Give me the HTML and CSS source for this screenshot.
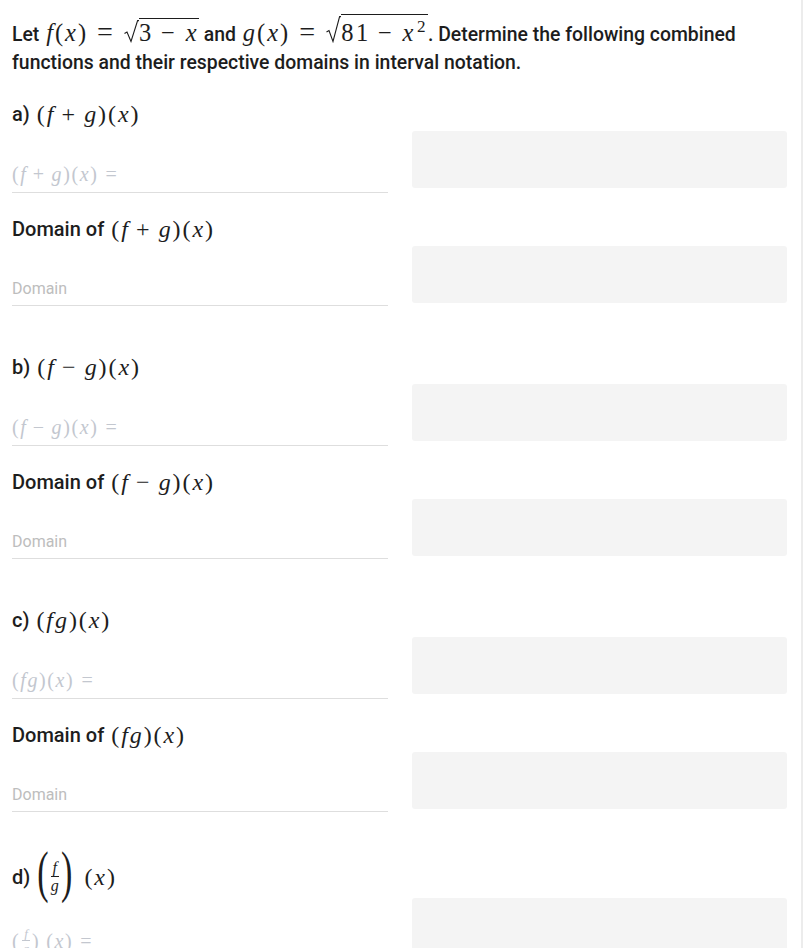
FILE: index.html
```html
<!DOCTYPE html>
<html lang="en">
<head>
<meta charset="utf-8">
<title>Combined functions</title>
<link rel="stylesheet" href="styles.css">
</head>
<body>
<div class="page">
  <p class="intro">Let <span class="m"><i>f</i>(<i>x</i>)<span class="rel">=</span><span class="sqrt"><svg class="rad" width="15" height="23" viewBox="0 0 15 23"><path d="M0.5 13.5 L3 12 L7 21.5 L13.6 0.6 L15 0.6" fill="none" stroke="#1d1d1d" stroke-width="1.1"/></svg><span class="under">3<span class="op">−</span><i>x</i></span></span></span> and <span class="m"><i>g</i>(<i>x</i>)<span class="rel">=</span><span class="sqrt"><svg class="rad" width="15" height="27" viewBox="0 0 15 27"><path d="M0.5 16 L3 14.5 L7 25.5 L13.6 0.6 L15 0.6" fill="none" stroke="#1d1d1d" stroke-width="1.1"/></svg><span class="under hi">81<span class="op">−</span><i>x</i><sup>2</sup></span></span></span>. Determine the following combined functions and their respective domains in interval notation.</p>

  <section class="part">
    <h2 class="label">a) <span class="m">(<i>f</i><span class="op">+</span><i>g</i>)(<i>x</i>)</span></h2>
    <div class="row">
      <div class="field"><span class="ph m">(<i>f</i><span class="op">+</span><i>g</i>)(<i>x</i>)<span class="rel">=</span></span></div>
      <div class="box"></div>
    </div>
    <h2 class="label">Domain of <span class="m">(<i>f</i><span class="op">+</span><i>g</i>)(<i>x</i>)</span></h2>
    <div class="row">
      <div class="field dom"><span class="ph">Domain</span></div>
      <div class="box"></div>
    </div>
  </section>

  <section class="part">
    <h2 class="label">b) <span class="m">(<i>f</i><span class="op">−</span><i>g</i>)(<i>x</i>)</span></h2>
    <div class="row">
      <div class="field"><span class="ph m">(<i>f</i><span class="op">−</span><i>g</i>)(<i>x</i>)<span class="rel">=</span></span></div>
      <div class="box"></div>
    </div>
    <h2 class="label">Domain of <span class="m">(<i>f</i><span class="op">−</span><i>g</i>)(<i>x</i>)</span></h2>
    <div class="row">
      <div class="field dom"><span class="ph">Domain</span></div>
      <div class="box"></div>
    </div>
  </section>

  <section class="part">
    <h2 class="label">c) <span class="m">(<i>f</i><i>g</i>)(<i>x</i>)</span></h2>
    <div class="row">
      <div class="field"><span class="ph m">(<i>f</i><i>g</i>)(<i>x</i>)<span class="rel">=</span></span></div>
      <div class="box"></div>
    </div>
    <h2 class="label">Domain of <span class="m">(<i>f</i><i>g</i>)(<i>x</i>)</span></h2>
    <div class="row">
      <div class="field dom"><span class="ph">Domain</span></div>
      <div class="box"></div>
    </div>
  </section>

  <section class="part">
    <h2 class="label tallrow">d) <span class="m mflex"><span class="bigp">(</span><span class="frac"><span class="num"><i>f</i></span><span class="den"><i>g</i></span></span><span class="bigp">)</span><span class="sp"></span><span>(<i>x</i>)</span></span></h2>
    <div class="row">
      <div class="field tallfield"><span class="ph m mflex"><span>(</span><span class="frac small"><span class="num"><i>f</i></span><span class="den"><i>g</i></span></span><span>)</span><span class="sp2"></span><span>(<i>x</i>)<span class="rel">=</span></span></span></div>
      <div class="box"></div>
    </div>
  </section>
</div>
</body>
</html>
```

FILE: styles.css
```css
html, body {
  margin: 0;
  padding: 0;
  background: #ffffff;
}

body {
  font-family: Roboto, "Liberation Sans", sans-serif;
  color: #1d1d1d;
}

.page {
  width: 803px;
  min-height: 948px;
  box-sizing: border-box;
  padding: 16px 0 0 12px;
  border-right: 2px solid #ececec;
  overflow: hidden;
}

.intro {
  margin: 0;
  width: 775px;
  font-size: 19.4px;
  font-weight: 500;
  line-height: 28px;
}

.m {
  font-family: "Liberation Serif", "Times New Roman", serif;
  font-weight: 400;
  font-size: 24px;
  line-height: 20px;
  letter-spacing: 0.08em;
  white-space: nowrap;
}

.intro .m {
  font-size: 24.5px;
  margin-left: 2px;
}

.m i {
  font-style: italic;
}

.op {
  margin: 0 0.3em 0 0.26em;
}

.rel {
  margin: 0 0.4em 0 0.36em;
}

.intro .rel {
  font-size: 1.15em;
  margin: 0 0.36em 0 0.32em;
  letter-spacing: 0;
}

.sqrt {
  white-space: nowrap;
}

.rad {
  vertical-align: -2px;
  margin-left: 1px;
}

.under {
  border-top: 1px solid #1d1d1d;
  letter-spacing: 0.1em;
}

.under.hi {
  padding-top: 4px;
}

.under .op {
  margin: 0 0.34em 0 0.3em;
}

.under sup {
  font-size: 0.7em;
  line-height: 0;
  vertical-align: 0.55em;
  margin-left: 1px;
}

.part {
  margin-top: 22px;
}

.part + .part {
  margin-top: 46px;
}

.label {
  margin: 0 0 2px 0;
  height: 30px;
  display: flex;
  align-items: center;
  gap: 7px;
  font-size: 20px;
  font-weight: 500;
  line-height: 30px;
}

.label .m {
  font-size: 24px;
}

.label.tallrow {
  height: 38px;
}

.mflex {
  display: inline-flex;
  align-items: center;
}

.row {
  display: flex;
  align-items: flex-start;
  gap: 24px;
}

.row + .label {
  margin-top: 21px;
}

.field {
  width: 376px;
  height: 62px;
  box-sizing: border-box;
  border-bottom: 1px solid #dedede;
  display: flex;
  align-items: flex-end;
  padding-bottom: 7px;
}

.field.dom {
  height: 60px;
  padding-bottom: 5px;
}

.field.tallfield {
  height: 70px;
  align-items: flex-start;
  padding: 30px 0 0 0;
}

.ph {
  color: #bdbdbd;
  font-size: 16px;
  line-height: 22px;
}

.ph.m {
  color: #c3c7cf;
  font-size: 20px;
  line-height: 22px;
}

.box {
  width: 375px;
  height: 57px;
  background: #f4f4f4;
  border-radius: 3px;
}

.bigp {
  display: inline-block;
  font-size: 34px;
  line-height: 34px;
  letter-spacing: 0;
  transform: translateY(-4px) scaleY(1.68);
}

.frac {
  display: inline-flex;
  flex-direction: column;
  align-items: center;
  font-size: 16px;
  line-height: 14px;
  letter-spacing: 0;
  margin: 0 2px;
}

.frac .num {
  border-bottom: 1px solid #1d1d1d;
  padding: 0 2px 1px 2px;
}

.frac .den {
  padding-top: 2px;
}

.sp {
  display: inline-block;
  width: 12px;
}

.frac.small {
  font-size: 13px;
  line-height: 11px;
  margin: 0 2px;
}

.frac.small .num {
  border-bottom-color: #c3c7cf;
}

.sp2 {
  display: inline-block;
  width: 6px;
}
```
